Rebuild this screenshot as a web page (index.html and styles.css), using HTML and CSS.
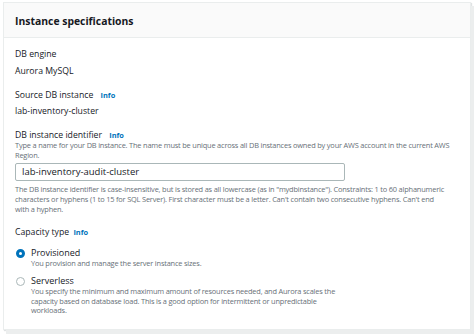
FILE: index.html
```html
<!DOCTYPE html>
<html>
<head>
<meta charset="utf-8">
<link rel="stylesheet" href="styles.css">
</head>
<body>
<div class="page">
  <section class="card">
    <header class="card-header"><h2>Instance specifications</h2></header>
    <div class="card-body">
      <div class="kv">
        <div class="label">DB engine</div>
        <div class="value">Aurora MySQL</div>
      </div>
      <div class="kv">
        <div class="label">Source DB instance <a class="info">Info</a></div>
        <div class="value">lab-inventory-cluster</div>
      </div>
      <div class="field">
        <div class="label">DB instance identifier <a class="info">Info</a></div>
        <div class="desc">Type a name for your DB instance. The name must be unique across all DB instances owned by your AWS account in the current AWS Region.</div>
        <div class="input">lab-inventory-audit-cluster</div>
        <div class="desc constraint">The DB instance identifier is case-insensitive, but is stored as all lowercase (as in "mydbinstance"). Constraints: 1 to 60 alphanumeric characters or hyphens (1 to 15 for SQL Server). First character must be a letter. Can't contain two consecutive hyphens. Can't end with a hyphen.</div>
      </div>
      <div class="field capacity">
        <div class="label">Capacity type <a class="info tight">Info</a></div>
        <div class="radios">
          <div class="radio">
            <span class="dot checked"></span>
            <div class="rtext">
              <div class="rlabel">Provisioned</div>
              <div class="desc">You provision and manage the server instance sizes.</div>
            </div>
          </div>
          <div class="radio">
            <span class="dot"></span>
            <div class="rtext">
              <div class="rlabel">Serverless</div>
              <div class="desc">You specify the minimum and maximum amount of resources needed, and Aurora scales the capacity based on database load. This is a good option for intermittent or unpredictable workloads.</div>
            </div>
          </div>
        </div>
      </div>
    </div>
  </section>
</div>
</body>
</html>
```
FILE: styles.css
```css
html, body { margin: 0; padding: 0; background: #fff; }
body { font-family: "Open Sans", "Noto Sans", sans-serif; color: #16191f; width: 474px; height: 334px; overflow: hidden; }
.page { padding: 2px 0 0 3px; }
.card { width: 468px; height: 328px; box-sizing: border-box; background: #fff; border: 1px solid #eaeded; box-shadow: 3px 4px 0 0 #eceeee, 1px 1px 1px 0 rgba(0,28,36,0.12); }
.card-header { background: #fafafa; border-bottom: 1px solid #eaeded; height: 35px; box-sizing: border-box; padding: 0 11px; display: flex; align-items: center; }
.card-header h2 { margin: 0; font-size: 10.4px; line-height: 14px; font-weight: 700; color: #16191f; padding-top: 1px; }
.card-body { padding: 9px 11px 0 11px; }
.label, .value, .rlabel { font-size: 8.7px; line-height: 14px; }
.kv { margin-bottom: 10px; }
.kv .value { margin-top: 2.5px; }
.info { color: #0073bb; font-weight: 700; font-size: 7.4px; margin-left: 5px; }
.info.tight { margin-left: 2px; }
.field .label { line-height: 12px; }
.field { margin-top: 11px; }
.desc { font-size: 7.4px; line-height: 9.7px; color: #687078; letter-spacing: -0.18px; }
.input { margin-top: 3px; height: 18px; width: 330px; box-sizing: border-box; border: 1px solid #aab7b8; border-radius: 2px; font-size: 9.5px; line-height: 16px; padding: 0 6px; color: #16191f; }
.constraint { margin-top: 4px; width: 430px; }
.capacity { margin-top: 11px; }
.radios { margin-top: 9px; display: flex; flex-direction: column; gap: 7px; }
.radio { display: flex; gap: 6px; }
.rtext { width: 312px; }
.dot { width: 9px; height: 9px; border-radius: 50%; border: 1px solid #aab7b8; box-sizing: border-box; margin-top: 2px; margin-left: 1px; flex: none; }
.dot.checked { border: 3px solid #0073bb; }
.radio .rlabel { line-height: 12px; font-size: 9px; }
.radio .desc { line-height: 9.5px; }
```
